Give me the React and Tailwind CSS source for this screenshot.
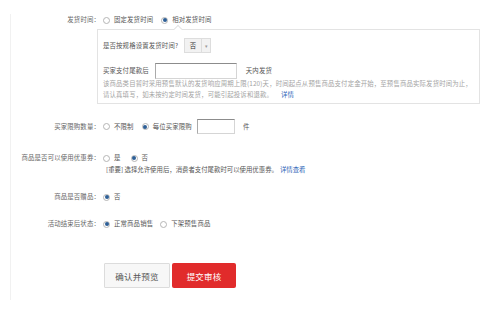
import React from "react";

const font = { fontFamily: '"Noto Sans CJK SC", "Noto Sans", sans-serif' };

function Radio({ checked }) {
  return (
    <span className="w-[7px] h-[7px] rounded-full border border-[#b5b5b5] bg-white flex items-center justify-center shrink-0">
      {checked && <span className="w-[4px] h-[4px] rounded-full bg-[#2d5f96]" />}
    </span>
  );
}

function Option({ checked, children, className = "" }) {
  return (
    <span className={`flex items-center gap-[4px] ${className}`}>
      <Radio checked={checked} />
      <span className="text-[#555]">{children}</span>
    </span>
  );
}

function Label({ children }) {
  return <span className="w-[89px] text-right text-[#666] shrink-0">{children}</span>;
}

export default function App() {
  return (
    <div className="w-[493px] h-[313px] bg-white pt-[8px] pl-[10px] text-[6.4px] leading-[12px] tracking-[0.15px] overflow-hidden" style={font}>
      <div className="border-l border-[#f1f1f1] h-[286px]">
        {/* 发货时间 */}
        <div className="mt-[6px] h-[12px] flex items-center">
          <Label>发货时间：</Label>
          <div className="flex items-center ml-[3px]">
            <Option>固定发货时间</Option>
            <Option checked className="ml-[8px]">相对发货时间</Option>
          </div>
        </div>

        <div className="flex">
          <div className="w-[86px] shrink-0" />
          <div className="relative mt-[3px] w-[383px] h-[75px] border border-[#e3e3e3] pl-[5px] pt-[8px]">
            <span className="absolute left-[77px] -top-[4px] w-[6px] h-[6px] bg-white border-l border-t border-[#e3e3e3] rotate-45" />
            <div className="flex items-center h-[15px]">
              <span className="text-[#555]">是否按规格设置发货时间?</span>
              <span className="ml-[6px] flex h-[15px] w-[27px] border border-[#ddd] bg-[#f2f2f2]">
                <span className="flex-1 flex items-center justify-center text-[#333]">否</span>
                <span className="w-[9px] border-l border-[#ddd] flex items-center justify-center text-[#999] text-[5px]">▾</span>
              </span>
            </div>
            <div className="mt-[10px] flex items-center h-[16px]">
              <span className="text-[#555]">买家支付尾款后</span>
              <span className="ml-[6px] w-[82px] h-[16px] border border-[#d5d5d5] border-t-[#8c8c8c] border-l-[#aaa] bg-white" />
              <span className="ml-[9px] text-[#555]">天内发货</span>
            </div>
            <p className="text-[#a3a3a3] leading-[10.5px] whitespace-nowrap">
              该商品类目暂时采用预售默认的发货响应周期上限(120)天，时间起点从预售商品支付定金开始，至预售商品实际发货时间为止，
              <br />
              请认真填写，如未按约定时间发货，可能引起投诉和退款。
              <span className="ml-[8px] text-[#2f65b8]">详情</span>
            </p>
          </div>
        </div>

        {/* 买家限购数量 */}
        <div className="mt-[15px] h-[15px] flex items-center">
          <Label>买家限购数量：</Label>
          <div className="flex items-center ml-[3px]">
            <Option>不限制</Option>
            <Option checked className="ml-[8px]">每位买家限购</Option>
            <span className="ml-[5px] w-[38px] h-[15px] border border-[#d5d5d5] border-t-[#8c8c8c] border-l-[#aaa] bg-white" />
            <span className="ml-[8px] text-[#555]">件</span>
          </div>
        </div>

        {/* 优惠券 */}
        <div className="mt-[18px] h-[12px] flex items-center">
          <Label>商品是否可以使用优惠券：</Label>
          <div className="flex items-center ml-[3px]">
            <Option>是</Option>
            <Option checked className="ml-[10px]">否</Option>
          </div>
        </div>
        <div className="h-[12px] flex items-center tracking-normal">
          <div className="w-[95px] shrink-0" />
          <span className="text-[#555] whitespace-nowrap">
            [重要] 选择允许使用后，消费者支付尾款时可以使用优惠券。
            <span className="ml-[2px] text-[#2f65b8]">详情查看</span>
          </span>
        </div>

        {/* 赠品 */}
        <div className="mt-[15px] h-[12px] flex items-center">
          <Label>商品是否赠品：</Label>
          <div className="flex items-center ml-[3px]">
            <Option checked>否</Option>
          </div>
        </div>

        {/* 活动结束后状态 */}
        <div className="mt-[15px] h-[12px] flex items-center">
          <Label>活动结束后状态：</Label>
          <div className="flex items-center ml-[3px]">
            <Option checked>正常商品销售</Option>
            <Option className="ml-[7px]">下架预售商品</Option>
          </div>
        </div>

        {/* buttons */}
        <div className="mt-[33px] flex">
          <div className="w-[93px] shrink-0" />
          <button className="w-[66px] h-[25px] bg-[#f7f7f7] border border-[#dcdcdc] text-[#555] text-[8.5px] rounded-[1px]">确认并预览</button>
          <button className="ml-[2px] w-[64px] h-[25px] bg-[#e12b2b] text-white text-[8.5px] rounded-[2px]">提交审核</button>
        </div>
      </div>
    </div>
  );
}
